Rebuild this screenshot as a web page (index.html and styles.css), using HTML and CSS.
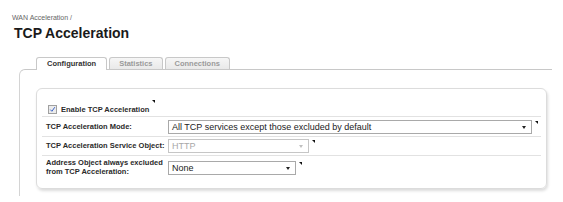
FILE: index.html
```html
<!DOCTYPE html>
<html>
<head>
<meta charset="utf-8">
<link rel="stylesheet" href="styles.css">
</head>
<body>
<div class="crumb">WAN Acceleration /</div>
<h1 class="title">TCP Acceleration</h1>
<div class="tabs">
  <div class="tab active">Configuration</div>
  <div class="tab">Statistics</div>
  <div class="tab">Connections</div>
</div>
<div class="panel">
  <div class="card">
    <div class="enable">
      <span class="check"><svg width="7" height="7" viewBox="0 0 7 7"><path d="M1.3 3.6 L2.9 5.3 L5.8 1.2" fill="none" stroke="#3b63c9" stroke-width="1"/></svg></span>
      <span class="enable-label">Enable TCP Acceleration</span>
      <span class="mark"></span>
    </div>
    <div class="row">
      <div class="label">TCP Acceleration Mode:</div>
      <div class="field">
        <div class="select wide"><span>All TCP services except those excluded by default</span><i class="arrow"></i></div>
        <span class="mark"></span>
      </div>
    </div>
    <div class="row r2">
      <div class="label">TCP Acceleration Service Object:</div>
      <div class="field">
        <div class="select mid disabled"><span>HTTP</span><i class="arrow"></i></div>
        <span class="mark"></span>
      </div>
    </div>
    <div class="row r3">
      <div class="label">Address Object always excluded from TCP Acceleration:</div>
      <div class="field">
        <div class="select narrow"><span>None</span><i class="arrow"></i></div>
        <span class="mark"></span>
      </div>
    </div>
  </div>
</div>
</body>
</html>
```

FILE: styles.css
```css
html, body {
  margin: 0;
  padding: 0;
  background: #fff;
  font-family: "Liberation Sans", Arial, sans-serif;
  color: #333;
}
.crumb {
  margin: 13px 0 0 12px;
  font-size: 7px;
  line-height: 9px;
  color: #666;
}
.title {
  margin: 3px 0 0 14px;
  font-size: 14px;
  line-height: 16px;
  font-weight: bold;
  color: #1a1a1a;
}
.tabs {
  display: flex;
  gap: 2px;
  margin: 16px 0 0 36px;
  position: relative;
  z-index: 1;
  height: 13px;
}
.tab {
  height: 12px;
  box-sizing: border-box;
  padding: 0 9px;
  border: 1px solid #c8c8c8;
  border-bottom: none;
  border-radius: 3px 3px 0 0;
  background: linear-gradient(#f6f6f6, #e9e9e9);
  font-size: 7.5px;
  font-weight: bold;
  line-height: 11px;
  color: #9a9a9a;
}
.tab.active {
  height: 13px;
  background: #fff;
  color: #333;
  padding: 0 10px;
}
.panel {
  margin: -1px 0 0 19px;
  width: 533px;
  height: 127px;
  box-sizing: border-box;
  border-top: 1px solid #c8c8c8;
  border-left: 1px solid #d4d4d4;
  border-top-left-radius: 6px;
  padding: 18px 5px 0 16px;
}
.card {
  border: 1px solid #dcdcdc;
  border-radius: 6px;
  box-shadow: 1px 2px 3px rgba(0, 0, 0, 0.14);
  height: 101px;
  box-sizing: border-box;
}
.enable {
  display: flex;
  align-items: center;
  height: 14px;
  padding: 13px 0 0 6px;
  margin: 0 5px;
  border-bottom: 1px solid #e2e2e2;
}
.check {
  width: 7px;
  height: 7px;
  border: 1px solid #a0a0a0;
  background: #ececec;
  display: inline-flex;
  margin-right: 4px;
}
.check svg {
  display: block;
}
.enable-label {
  font-size: 7.5px;
  font-weight: bold;
  color: #2a2a2a;
}
.mark {
  display: inline-block;
  width: 0;
  height: 0;
  border-top: 3px solid #111;
  border-left: 3px solid transparent;
  align-self: flex-start;
  margin-left: 3px;
  margin-top: -2px;
}
.field .mark {
  margin-top: 1px;
  margin-left: 3px;
}
.row {
  display: flex;
  margin: 0 5px;
  padding: 3px 0 2px;
  border-bottom: 1px solid #e2e2e2;
  align-items: center;
}
.row.r2 {
  padding: 2px 0 2px;
}
.row.r3 {
  border-bottom: none;
  padding: 3px 0 0;
  align-items: flex-start;
}
.label {
  width: 122px;
  padding-left: 4px;
  font-size: 7.5px;
  font-weight: bold;
  line-height: 8.5px;
  color: #2a2a2a;
}
.r3 .field {
  margin-top: 2px;
}
.field {
  display: flex;
  align-items: flex-start;
}
.select {
  position: relative;
  height: 14px;
  box-sizing: border-box;
  border: 1px solid #a9a9a9;
  background: #fff;
  font-size: 9px;
  line-height: 12px;
  padding-left: 3px;
  color: #222;
}
.select.wide { width: 364px; }
.select.mid { width: 141px; }
.select.narrow { width: 128px; }
.select.disabled {
  border-color: #c6c6c6;
  color: #a8a8a8;
}
.arrow {
  position: absolute;
  right: 5px;
  top: 5px;
  width: 0;
  height: 0;
  border-left: 2px solid transparent;
  border-right: 2px solid transparent;
  border-top: 3px solid #222;
}
.disabled .arrow {
  border-top-color: #c0c0c0;
}
```
